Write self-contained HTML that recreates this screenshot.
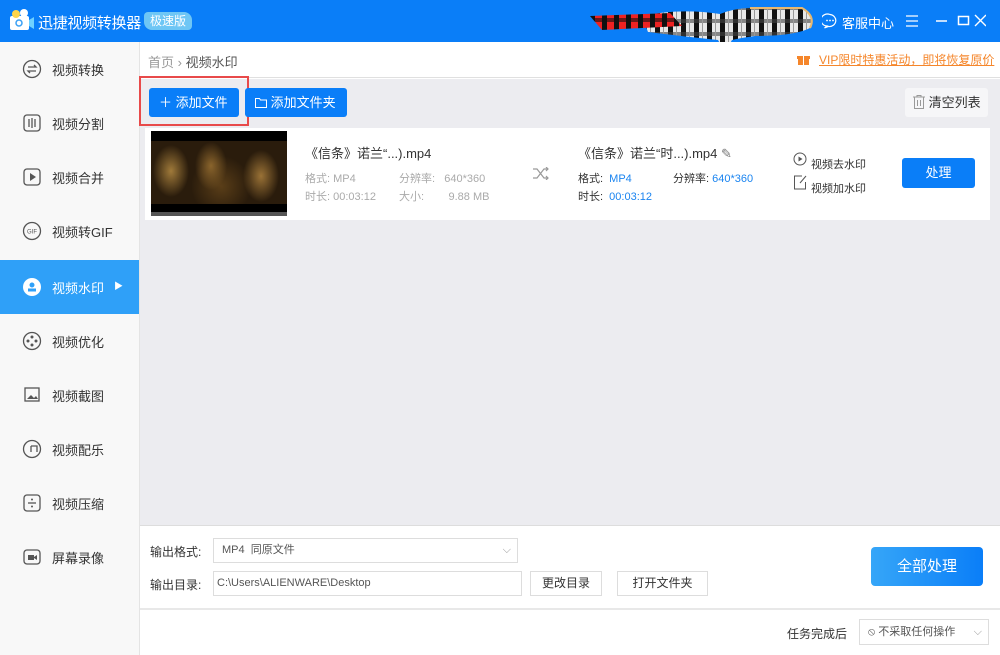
<!DOCTYPE html>
<html><head><meta charset="utf-8">
<style>
*{margin:0;padding:0;box-sizing:border-box}
body{width:1000px;height:655px;overflow:hidden;font-family:"Liberation Sans","Noto Sans CJK SC",sans-serif;font-size:13px;color:#333;background:#fff;position:relative}
.abs{position:absolute}
.top{left:0;top:0;width:1000px;height:42px;background:#0a7ef8}
.side{left:0;top:42px;width:140px;height:613px;background:#f8f8f8;border-right:1px solid #e4e4e4}
.item{position:absolute;left:0;width:139px;height:54px;font-size:13px;color:#333}
.item span{position:absolute;left:52px;top:18px}
.ic{position:absolute;left:22px;top:17px;width:20px;height:20px}
.item.act{background:#2fa0f8;color:#fff}
.btn{position:absolute;background:#0a7ef8;color:#fff;border-radius:3px;font-size:13px}
</style></head><body>
<div class="abs top"></div>
<svg class="abs" style="left:9px;top:8px" width="26" height="24" viewBox="0 0 26 24"><rect x="1" y="8" width="19" height="14" rx="2" fill="#fff"/><circle cx="7" cy="6" r="4" fill="#ffd54a"/><circle cx="15" cy="5" r="4" fill="#fff"/><path d="M20 12l5-3v12l-5-3z" fill="#6fd1ff"/><circle cx="10" cy="15" r="3" fill="none" stroke="#3aa0f5" stroke-width="1.5"/></svg>
<div class="abs" style="left:38px;top:12px;color:#fff;font-size:15px;letter-spacing:-0.3px">迅捷视频转换器</div>
<div class="abs" style="left:144px;top:12px;width:48px;height:18px;background:#6ec6f5;border-radius:4px 8px 4px 8px;color:#fff;font-size:12px;text-align:center;line-height:18px">极速版</div>
<svg class="abs" style="left:590px;top:6px" width="230" height="46" viewBox="0 0 230 46">
<defs><pattern id="pl" width="13" height="13" patternUnits="userSpaceOnUse"><rect width="13" height="13" fill="#e8e8e8"/><rect x="0" width="5" height="13" fill="#111"/><rect y="0" width="13" height="4" fill="#444" opacity=".6"/><rect x="8" width="1" height="13" fill="#999"/></pattern>
<pattern id="pr" width="12" height="12" patternUnits="userSpaceOnUse"><rect width="12" height="12" fill="#e22"/><rect width="5" height="12" fill="#111"/><rect width="12" height="4" fill="#111" opacity=".6"/></pattern></defs>
<path d="M52 10 Q90 2 130 8 Q145 2 160 2 L212 2 Q226 10 220 22 Q205 30 165 30 Q150 32 142 34 L135 46 L128 34 Q90 30 58 26Z" fill="url(#pl)"/>
<path d="M160 2 L212 2 Q226 10 220 22" fill="none" stroke="#e8b870" stroke-width="2"/>
<path d="M0 10 L80 7 L92 20 L12 24Z" fill="url(#pr)"/>
</svg>
<svg class="abs" style="left:822px;top:13px" width="16" height="16" viewBox="0 0 16 16"><path d="M8 1.5a6.5 6 0 1 0-3 11.5l-2.5 2 4-1.5A6.5 6 0 1 0 8 1.5z" fill="none" stroke="#fff" stroke-width="1.2"/><circle cx="5" cy="7.5" r=".9" fill="#fff"/><circle cx="8" cy="7.5" r=".9" fill="#fff"/><circle cx="11" cy="7.5" r=".9" fill="#fff"/></svg>
<div class="abs" style="left:842px;top:13px;color:#fff;font-size:13px">客服中心</div>
<svg class="abs" style="left:906px;top:14px" width="80" height="14" viewBox="0 0 80 14"><path d="M0 2h12M0 7h12M0 12h12" stroke="#fff" stroke-width="1.2"/><path d="M30 7h11" stroke="#fff" stroke-width="1.5"/><rect x="52.5" y="2.5" width="10" height="8" fill="none" stroke="#fff" stroke-width="1.5"/><path d="M69 1l11 11M80 1L69 12" stroke="#fff" stroke-width="1.4"/></svg>

<div class="abs side">
<div class="item" style="top:0"><svg class="ic" viewBox="0 0 20 20"><circle cx="10" cy="10" r="8.5" fill="none" stroke="#555" stroke-width="1.3"/><path d="M6 8h8l-2-2M14 12H6l2 2" fill="none" stroke="#555" stroke-width="1.3"/></svg><span>视频转换</span></div>
<div class="item" style="top:54px"><svg class="ic" viewBox="0 0 20 20"><rect x="2" y="2" width="16" height="16" rx="3" fill="none" stroke="#555" stroke-width="1.3"/><path d="M7 6v8M10 5v10M13 6v8" stroke="#555" stroke-width="1.3"/></svg><span>视频分割</span></div>
<div class="item" style="top:108px"><svg class="ic" viewBox="0 0 20 20"><rect x="2" y="2" width="16" height="16" rx="3" fill="none" stroke="#555" stroke-width="1.3"/><path d="M8 6l6 4-6 4z" fill="#555"/></svg><span>视频合并</span></div>
<div class="item" style="top:162px"><svg class="ic" viewBox="0 0 20 20"><circle cx="10" cy="10" r="8.5" fill="none" stroke="#555" stroke-width="1.3"/><text x="10" y="12.5" font-size="6" text-anchor="middle" fill="#555" font-family="Liberation Sans">GIF</text></svg><span>视频转GIF</span></div>
<div class="item act" style="top:218px"><svg class="ic" viewBox="0 0 20 20"><circle cx="10" cy="10" r="9" fill="#fff"/><circle cx="10" cy="8" r="2.5" fill="#2fa0f8"/><rect x="6" y="11.5" width="8" height="3" fill="#2fa0f8"/></svg><span>视频水印</span><span style="left:114px;top:19px;font-size:9px">▶</span></div>
<div class="item" style="top:272px"><svg class="ic" viewBox="0 0 20 20"><circle cx="10" cy="10" r="8.5" fill="none" stroke="#555" stroke-width="1.3"/><circle cx="10" cy="6" r="1.5" fill="#555"/><circle cx="6" cy="10" r="1.5" fill="#555"/><circle cx="14" cy="10" r="1.5" fill="#555"/><circle cx="10" cy="14" r="1.5" fill="#555"/></svg><span>视频优化</span></div>
<div class="item" style="top:326px"><svg class="ic" viewBox="0 0 20 20"><rect x="3" y="3" width="14" height="13" fill="none" stroke="#555" stroke-width="1.3"/><path d="M5 14l4-4 3 3 2-2 2 3z" fill="#555"/></svg><span>视频截图</span></div>
<div class="item" style="top:380px"><svg class="ic" viewBox="0 0 20 20"><circle cx="10" cy="10" r="8.5" fill="none" stroke="#555" stroke-width="1.3"/><path d="M9 7h6v6M9 7v6" fill="none" stroke="#555" stroke-width="1.3"/></svg><span>视频配乐</span></div>
<div class="item" style="top:434px"><svg class="ic" viewBox="0 0 20 20"><rect x="2" y="2" width="16" height="16" rx="3" fill="none" stroke="#555" stroke-width="1.3"/><path d="M6 10h8" stroke="#555" stroke-width="1.3"/><circle cx="10" cy="6.5" r="1" fill="#555"/><circle cx="10" cy="13.5" r="1" fill="#555"/></svg><span>视频压缩</span></div>
<div class="item" style="top:488px"><svg class="ic" viewBox="0 0 20 20"><rect x="2" y="3" width="16" height="14" rx="3" fill="none" stroke="#555" stroke-width="1.3"/><rect x="6" y="8" width="6" height="5" fill="#555"/><path d="M12 10l3-2v5l-3-2z" fill="#555"/></svg><span>屏幕录像</span></div>
</div>

<div class="abs" style="left:140px;top:42px;width:860px;height:36px;background:#fff;border-bottom:1px solid #e0e0e0"></div>
<div class="abs" style="left:148px;top:52px;font-size:13px;color:#999">首页 › <span style="color:#555">视频水印</span></div>
<svg class="abs" style="left:797px;top:52px" width="13" height="13" viewBox="0 0 13 13"><rect x="0" y="4" width="13" height="3" fill="#f5862b"/><rect x="1" y="7" width="11" height="6" fill="#f5862b"/><rect x="6" y="4" width="1" height="9" fill="#fff"/></svg>
<div class="abs" style="left:819px;top:51px;font-size:12px;color:#f5862b;text-decoration:underline">VIP限时特惠活动，即将恢复原价</div>

<div class="abs" style="left:140px;top:79px;width:860px;height:446px;background:#ececf0"></div>
<div class="abs" style="left:139px;top:76px;width:110px;height:50px;border:2px solid #e84a4a"></div>
<div class="btn" style="left:149px;top:88px;width:90px;height:29px;line-height:29px;padding-left:10px">＋ 添加文件</div>
<div class="btn" style="left:245px;top:88px;width:102px;height:29px;line-height:29px;padding-left:10px"><svg width="12" height="11" viewBox="0 0 12 11" style="vertical-align:-1px"><path d="M.5 1.5h4l1 1.5h6v7.5H.5z" fill="none" stroke="#fff"/></svg> 添加文件夹</div>
<div class="abs" style="left:905px;top:88px;width:83px;height:29px;background:#f6f6f8;border-radius:3px;font-size:13px;line-height:29px;padding-left:8px;color:#333"><svg width="12" height="14" viewBox="0 0 12 14" style="vertical-align:-2px"><path d="M0 2h12M4 2V.5h4V2M1.5 2v11.5h9V2M4.5 5v6M7.5 5v6" fill="none" stroke="#999"/></svg> 清空列表</div>

<div class="abs" style="left:145px;top:128px;width:845px;height:92px;background:#fff"></div>
<div class="abs" style="left:151px;top:131px;width:136px;height:85px;background:#000;overflow:hidden">
<div style="position:absolute;left:0;top:10px;width:136px;height:63px;background:radial-gradient(ellipse 18px 26px at 20px 30px,#a07a3a,transparent),radial-gradient(ellipse 16px 24px at 60px 25px,#8a642c,transparent),radial-gradient(ellipse 18px 26px at 110px 35px,#9a7236,transparent),radial-gradient(ellipse 30px 30px at 70px 45px,#5a3e18,transparent),#2a1c0c"></div>
<div style="position:absolute;left:0;bottom:0;width:136px;height:4px;background:#555"></div></div>
<div class="abs" style="left:305px;top:143px;font-size:13px;color:#333">《信条》诺兰“...).mp4</div>
<div class="abs" style="left:305px;top:170px;font-size:11px;color:#aaa;line-height:18px">格式: MP4<br>时长: 00:03:12</div>
<div class="abs" style="left:399px;top:170px;font-size:11px;color:#aaa;line-height:18px">分辨率:&nbsp;&nbsp; 640*360<br>大小:&nbsp;&nbsp;&nbsp;&nbsp;&nbsp;&nbsp;&nbsp; 9.88 MB</div>
<svg class="abs" style="left:533px;top:167px" width="16" height="13" viewBox="0 0 16 13"><path d="M0 2h4l7 9h4M0 11h4l7-9h4M13 0l2 2-2 2M13 9l2 2-2 2" fill="none" stroke="#999" stroke-width="1.2"/></svg>
<div class="abs" style="left:578px;top:143px;font-size:13px;color:#333">《信条》诺兰“时...).mp4 <span style="color:#777">✎</span></div>
<div class="abs" style="left:578px;top:170px;font-size:11px;color:#333;line-height:18px">格式:&nbsp; <span style="color:#1a84f0">MP4</span><br>时长:&nbsp; <span style="color:#1a84f0">00:03:12</span></div>
<div class="abs" style="left:673px;top:170px;font-size:11px;color:#333">分辨率: <span style="color:#1a84f0">640*360</span></div>
<svg class="abs" style="left:793px;top:152px" width="14" height="40" viewBox="0 0 14 40"><circle cx="7" cy="7" r="6" fill="none" stroke="#555"/><path d="M5.5 4.5l4 2.5-4 2.5z" fill="#555"/><path d="M9 24H1.5v13h11v-7" fill="none" stroke="#555"/><path d="M7 31l6-7" stroke="#555"/></svg>
<div class="abs" style="left:811px;top:153px;font-size:11px;color:#333;line-height:24px">视频去水印<br>视频加水印</div>
<div class="btn" style="left:902px;top:158px;width:73px;height:30px;line-height:30px;text-align:center">处理</div>

<div class="abs" style="left:140px;top:525px;width:860px;height:85px;background:#fff;border-top:1px solid #ddd;border-bottom:2px solid #e8e8e8"></div>
<div class="abs" style="left:150px;top:543px;font-size:12px">输出格式:</div>
<div class="abs" style="left:213px;top:538px;width:305px;height:25px;border:1px solid #ddd;font-size:11px;color:#555;line-height:23px;padding-left:8px">MP4&nbsp; 同原文件<span style="position:absolute;right:6px;color:#999">⌵</span></div>
<div class="abs" style="left:150px;top:576px;font-size:12px">输出目录:</div>
<div class="abs" style="left:213px;top:571px;width:309px;height:25px;border:1px solid #ddd;font-size:11px;color:#555;line-height:23px;padding-left:3px">C:\Users\ALIENWARE\Desktop</div>
<div class="abs" style="left:530px;top:571px;width:72px;height:25px;border:1px solid #ddd;font-size:12px;text-align:center;line-height:23px">更改目录</div>
<div class="abs" style="left:617px;top:571px;width:91px;height:25px;border:1px solid #ddd;font-size:12px;text-align:center;line-height:23px">打开文件夹</div>
<div class="abs" style="left:871px;top:547px;width:112px;height:39px;border-radius:4px;background:linear-gradient(90deg,#36a6f8,#0a7ef8);color:#fff;font-size:15px;text-align:center;line-height:39px">全部处理</div>
<div class="abs" style="left:787px;top:625px;font-size:12px">任务完成后</div>
<div class="abs" style="left:859px;top:619px;width:130px;height:26px;border:1px solid #ddd;font-size:11px;color:#555;line-height:24px;padding-left:8px">⦸ 不采取任何操作<span style="position:absolute;right:6px;color:#999">⌵</span></div>
</body></html>
